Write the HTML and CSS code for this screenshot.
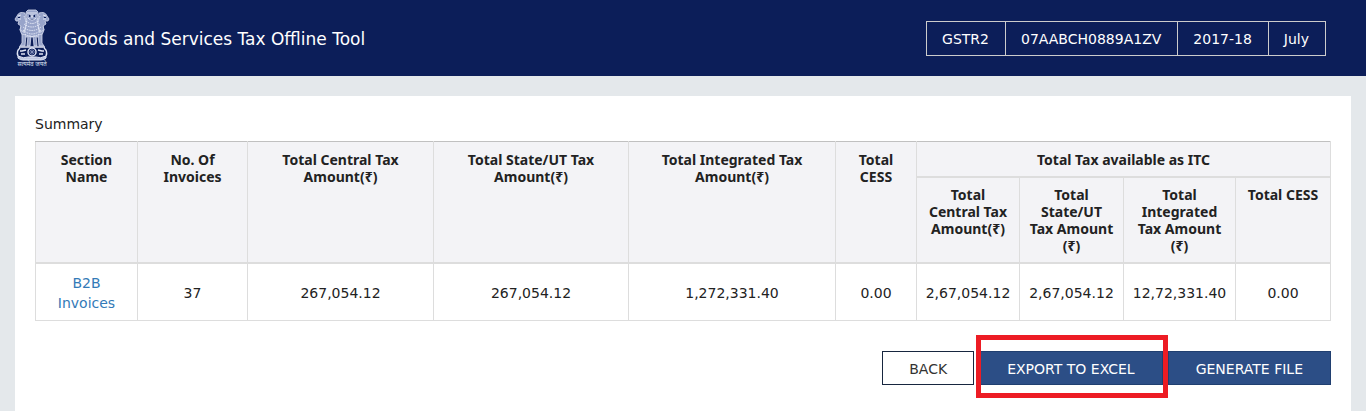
FILE: index.html
```html
<!DOCTYPE html>
<html lang="en">
<head>
<meta charset="utf-8">
<title>Goods and Services Tax Offline Tool</title>
<link rel="stylesheet" href="styles.css">
</head>
<body>
<header class="topbar">
  <div class="brand">
    <svg class="emblem" viewBox="0 0 36 58" role="img" aria-label="National emblem of India">
      <g fill="#98a4ca" stroke="#d5dbee" stroke-width=".8" stroke-linejoin="round">
        <path d="M12 3 L14 1 H22 L24 3 L23 9 L25 12 Q30 16 30 21 Q29 26 25 28 H11 Q7 26 6 21 Q6 16 11 12 L13 9Z"/>
        <path d="M11 4 Q5 2 3 7 L1 10 L2 12 L5 12 L4 15 L7 17 L6 21 L10 23 L13 12Z"/>
        <path d="M25 4 Q31 2 33 7 L35 10 L34 12 L31 12 L32 15 L29 17 L30 21 L26 23 L23 12Z"/>
        <path d="M8 25 L12 26 L11 37 H6 L8 34Z M14 27 H17 L16 37 H13Z M19 27 H22 L23 37 H20Z M24 26 L28 25 L28 34 L30 37 H25Z"/>
      </g>
      <path fill="#0c1e59" d="M15 6 H17 V8 H15Z M19 6 H21 V8 H19Z M4 8 H6 V9 H4Z M30 8 H32 V9 H30Z M16 10 H20 V11 H16Z"/>
      <g fill="none" stroke="#f4f6ff" stroke-width=".8">
        <path d="M13 4 H23 M17 5 V8 H19 V5 M14 9 Q18 13 22 9 M4 7 L7 6 M4 10 H7 M32 7 L29 6 M32 10 H29"/>
        <path stroke-dasharray="1.5 .8" d="M10 7 Q14 15 10 24 M26 7 Q22 15 26 24 M12 12 Q18 17 24 12 M10 15 Q18 21 26 15 M9 18 Q18 25 27 18 M9 21 Q18 29 27 21 M11 25 Q18 30 25 25"/>
      </g>
      <g fill="none" stroke="#dfe4f4">
        <path stroke-width="1.5" d="M5 38 H31 M4 47 Q2 42 6 39 M32 47 Q34 42 30 39"/>
        <circle cx="18" cy="43" r="4" stroke-width="1.5"/>
        <path stroke="#98a4ca" stroke-width=".7" d="M14 43 H22 M18 39 V47 M15 40 L21 46 M21 40 L15 46"/>
        <path stroke-width="1.5" d="M6 42 H8 L12 41 M7 45 H11 M24 41 L28 42 H30 M25 45 H29"/>
        <path fill="#bcc5e0" stroke-width="1" d="M4 47 Q10 50 14 48 H22 Q26 50 32 47 V49 Q30 51 27 51 H9 Q6 51 4 49Z"/>
      </g>
      <text class="motto" x="18" y="57" text-anchor="middle">सत्यमेव जयते</text>
    </svg>
    <span class="title">Goods and Services Tax Offline Tool</span>
  </div>
  <ul class="context">
    <li>GSTR2</li>
    <li>07AABCH0889A1ZV</li>
    <li>2017-18</li>
    <li>July</li>
  </ul>
</header>

<main class="panel">
  <table class="summary">
    <caption>Summary</caption>
    <colgroup>
      <col class="c-section"><col class="c-count"><col class="c-central"><col class="c-state"><col class="c-integrated"><col class="c-cess">
      <col class="c-itc-central"><col class="c-itc-state"><col class="c-itc-integrated"><col class="c-itc-cess">
    </colgroup>
    <thead>
      <tr>
        <th rowspan="2">Section<br>Name</th>
        <th rowspan="2">No. Of<br>Invoices</th>
        <th rowspan="2">Total Central Tax<br>Amount(₹)</th>
        <th rowspan="2">Total State/UT Tax<br>Amount(₹)</th>
        <th rowspan="2">Total Integrated Tax<br>Amount(₹)</th>
        <th rowspan="2">Total<br>CESS</th>
        <th colspan="4">Total Tax available as ITC</th>
      </tr>
      <tr>
        <th>Total<br>Central Tax<br>Amount(₹)</th>
        <th>Total<br>State/UT<br>Tax Amount<br>(₹)</th>
        <th>Total<br>Integrated<br>Tax Amount<br>(₹)</th>
        <th>Total CESS</th>
      </tr>
    </thead>
    <tbody>
      <tr>
        <td><a href="#">B2B Invoices</a></td>
        <td>37</td>
        <td>267,054.12</td>
        <td>267,054.12</td>
        <td>1,272,331.40</td>
        <td>0.00</td>
        <td>2,67,054.12</td>
        <td>2,67,054.12</td>
        <td>12,72,331.40</td>
        <td>0.00</td>
      </tr>
    </tbody>
  </table>
  <div class="actions">
    <button type="button" class="btn">BACK</button>
    <div class="marked"><button type="button" class="btn btn-primary">EXPORT TO EXCEL</button></div>
    <button type="button" class="btn btn-primary">GENERATE FILE</button>
  </div>
</main>
</body>
</html>
```
FILE: styles.css
```css
* { box-sizing: border-box; }
html { background: #e4e8eb; }
body {
  display: flex;
  flex-direction: column;
  min-height: 100vh;
  margin: 0;
  color: #222;
  font: 14px/20px Verdana, "DejaVu Sans", sans-serif;
}
.topbar {
  display: flex;
  align-items: center;
  justify-content: space-between;
  padding: 9px 40px 9px 14px;
  background: #0c1e59;
  color: #fff;
}
.brand { display: flex; align-items: center; gap: 14px; }
.emblem { width: 36px; height: 58px; }
.motto { fill: #dfe4f4; font: 6px "Noto Sans Devanagari", "Noto Sans", sans-serif; }
.title { padding-top: 2px; font-size: 17px; }
.context {
  display: flex;
  margin: 0;
  padding: 0;
  list-style: none;
  border: 1px solid #ccc;
}
.context li { padding: 7px 16px 6px 15px; }
.context li + li { border-left: 1px solid #ccc; }
.panel {
  flex: 1;
  margin: 20px 15px 0;
  padding: 18px 20px 26px;
  background: #fff;
}
.summary {
  width: 100%;
  table-layout: fixed;
  border-collapse: collapse;
  text-align: center;
}
.summary caption { padding-bottom: 7px; text-align: left; }
.summary th { padding: 8px 4px; }
.summary td { padding: 9px 4px 7px; }
.summary th, .summary td { border: 1px solid #ddd; }
.summary th {
  border-bottom-width: 2px;
  background: #f3f3f6;
  vertical-align: top;
  font: bold 14px/17px "Noto Sans", sans-serif;
}
.summary thead tr:first-child th { padding-top: 9px; border-top-color: #c0c0c0; }
.summary a { color: #337ab7; text-decoration: none; }
.summary td:first-child { padding-left: 16px; padding-right: 16px; }
.c-section { width: 102px; }
.c-count { width: 110px; }
.c-central { width: 186px; }
.c-state { width: 195px; }
.c-integrated { width: 207px; }
.c-cess { width: 81px; }
.c-itc-central { width: 103px; }
.c-itc-state { width: 104px; }
.c-itc-integrated { width: 112px; }
.c-itc-cess { width: 95px; }
.actions {
  display: flex;
  justify-content: flex-end;
  gap: 5px;
  margin-top: 30px;
}
.btn {
  padding: 7px 26px 5px;
  border: 1px solid #17263f;
  background: #fff;
  color: #333;
  font: inherit;
}
.btn-primary { padding-left: 27px; padding-right: 27px; border-color: #203f70; background: #2c4e86; color: #fff; }
.marked { position: relative; }
.marked::after {
  content: "";
  position: absolute;
  inset: -16px -5px -13px -3px;
  border: 5px solid #ed1c24;
  pointer-events: none;
}
```
